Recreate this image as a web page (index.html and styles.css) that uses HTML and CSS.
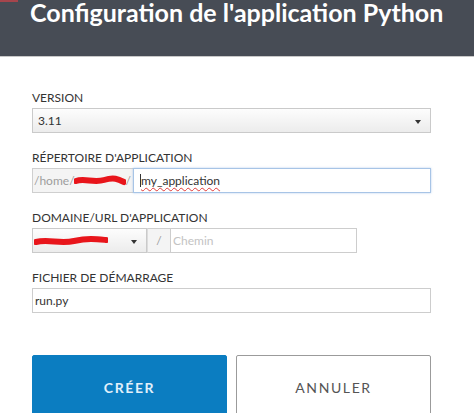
FILE: index.html
```html
<!DOCTYPE html>
<html lang="fr">
<head>
<meta charset="utf-8">
<title>Configuration de l'application Python</title>
<link rel="stylesheet" href="styles.css">
</head>
<body>
<header class="header">
  <span class="corner"></span>
  <h1 class="title">Configuration de l'application Python</h1>
</header>
<form class="form">
  <div class="group">
    <label class="label">VERSION</label>
    <div class="select full">
      <span class="select-text">3.11</span>
      <span class="arrow"></span>
    </div>
  </div>
  <div class="group">
    <label class="label">RÉPERTOIRE D'APPLICATION</label>
    <div class="row">
      <div class="prefix home">/home/<svg class="scribble" width="52" height="12" viewBox="0 0 52 12"><path d="M2 6 C10 3, 20 8, 30 5 S 44 4, 50 7" stroke="#e8151b" stroke-width="6" fill="none" stroke-linecap="round"/></svg>/</div>
      <div class="input focused"><span class="caret"></span><span class="spell">my_application</span></div>
    </div>
  </div>
  <div class="group">
    <label class="label">DOMAINE/URL D'APPLICATION</label>
    <div class="row">
      <div class="select domain">
        <svg class="scribble" width="74" height="12" viewBox="0 0 74 12"><path d="M2 7 C14 4, 26 9, 40 6 S 62 4, 72 5" stroke="#e8151b" stroke-width="6" fill="none" stroke-linecap="round"/></svg>
        <span class="arrow"></span>
      </div>
      <div class="prefix slash">/</div>
      <div class="input path"><span class="placeholder">Chemin</span></div>
    </div>
  </div>
  <div class="group">
    <label class="label">FICHIER DE DÉMARRAGE</label>
    <div class="input full plain">run.py</div>
  </div>
  <div class="buttons">
    <button type="button" class="btn primary">CRÉER</button>
    <button type="button" class="btn secondary">ANNULER</button>
  </div>
</form>
</body>
</html>
```
FILE: styles.css
```css
* { box-sizing: border-box; }
html, body { margin: 0; padding: 0; background: #fff; overflow: hidden; }
body { font-family: Lato, "Open Sans", "Liberation Sans", sans-serif; color: #333; width: 474px; height: 413px; }

.header {
  position: relative;
  height: 57px;
  background: #474c55;
  border-bottom: 1px solid #c8c8c8;
  padding-left: 30px;
}
.corner {
  position: absolute;
  left: 0; top: 0;
  width: 18px; height: 2px;
  background: #a5454c;
}
.title {
  margin: 0;
  font-size: 25px;
  line-height: 24px;
  font-weight: 700;
  color: #fff;
  white-space: nowrap;
}

.form {
  margin: 34px 0 0 32px;
  width: 399px;
  display: flex;
  flex-direction: column;
  gap: 18px;
}
.group { display: flex; flex-direction: column; }
.label {
  font-size: 12px;
  line-height: 14px;
  color: #333;
  margin-bottom: 3px;
}
.full { width: 399px; }

.select {
  position: relative;
  height: 25px;
  border: 1px solid #cacaca;
  background: linear-gradient(#fdfdfd, #ececec);
  display: flex;
  align-items: center;
  padding-left: 5px;
  font-size: 12px;
}
.arrow {
  position: absolute;
  right: 9px;
  top: 11px;
  width: 0; height: 0;
  border-left: 3.5px solid transparent;
  border-right: 3.5px solid transparent;
  border-top: 4px solid #333;
}

.row { display: flex; height: 25px; }
.prefix {
  background: #f4f4f4;
  border: 1px solid #cfcfcf;
  border-right: none;
  color: #9d9d9d;
  font-size: 12px;
  display: flex;
  align-items: center;
}
.home { width: 101px; padding-left: 1px; }
.scribble { display: block; }
.home .scribble { margin: 0 0 0 -1px; }

.input {
  height: 25px;
  border: 1px solid #cdcdcd;
  background: #fff;
  font-size: 12px;
  display: flex;
  align-items: center;
  padding-left: 6px;
  color: #333;
}
.focused {
  width: 298px;
  border-color: #a7c4e6;
  box-shadow: 0 0 2px rgba(110, 160, 220, 0.5);
}
.caret { width: 1px; height: 13px; background: #333; margin-right: 0; }
.spell {
  text-decoration: underline wavy #e03a3a;
  text-decoration-thickness: 1px;
  text-underline-offset: 2px;
}
.plain { padding-left: 2px; }

.domain { width: 115px; padding-left: 1px; }
.domain .arrow { right: 9px; }
.slash { width: 23px; justify-content: center; border-left: 1px solid #dcdcdc; }
.path { width: 187px; padding-left: 2px; }
.placeholder { color: #c3c3c3; }

.buttons {
  display: flex;
  gap: 9px;
  margin-top: 24px;
}
.btn {
  width: 195px;
  height: 60px;
  border-radius: 2px;
  font-family: Lato, "Open Sans", "Liberation Sans", sans-serif;
  font-size: 14px;
  font-weight: 700;
  letter-spacing: 1.6px;
  padding: 4px 0 0;
  display: flex;
  align-items: center;
  justify-content: center;
  align-self: flex-start;
  cursor: pointer;
}
.primary { background: #0b7dc1; border: 1px solid #0b7dc1; color: #e1f0fb; }
.secondary { background: #fff; border: 1px solid #9b9b9b; color: #555; font-weight: 400; }
```
